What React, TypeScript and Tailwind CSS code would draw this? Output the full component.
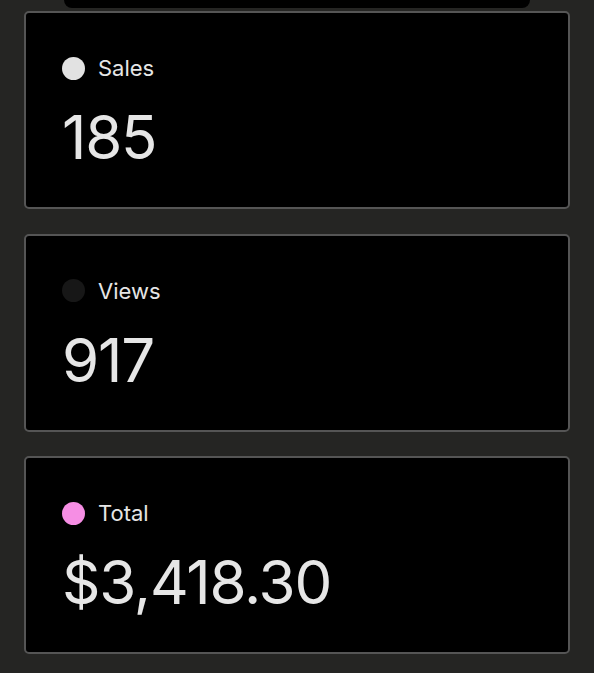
const STATS = [
  { label: 'Sales', value: '185', dot: 'bg-[#e2e2e2]' },
  { label: 'Views', value: '917', dot: 'bg-[#171717]' },
  { label: 'Total', value: '$3,418.30', dot: 'bg-[#f68ee4]' },
]

function StatCard({ label, value, dot }: { label: string; value: string; dot: string }) {
  return (
    <div className="flex h-[198px] flex-col rounded-[5px] border-2 border-[#555555] bg-black pl-[36px] pt-[43px]">
      <div className="flex h-[24px] items-center gap-[13px]">
        <span className={`h-[23px] w-[23px] rounded-full ${dot}`} />
        <span className="text-[22px] leading-[24px] text-[#e6e6e6]">{label}</span>
      </div>
      <div className="mt-[27px] text-[60px] leading-none tracking-[-0.02em] text-[#e6e6e6]">{value}</div>
    </div>
  )
}

export default function App() {
  return (
    <div
      className="min-h-[673px] bg-[#252523] px-[24px]"
      style={{ fontFamily: 'Inter, "Liberation Sans", sans-serif' }}
    >
      <div className="mx-[40px] h-[8px] rounded-b-[12px] bg-black" />
      <div className="mt-[3px] flex flex-col gap-[24.5px]">
        {STATS.map((s) => (
          <StatCard key={s.label} {...s} />
        ))}
      </div>
    </div>
  )
}
